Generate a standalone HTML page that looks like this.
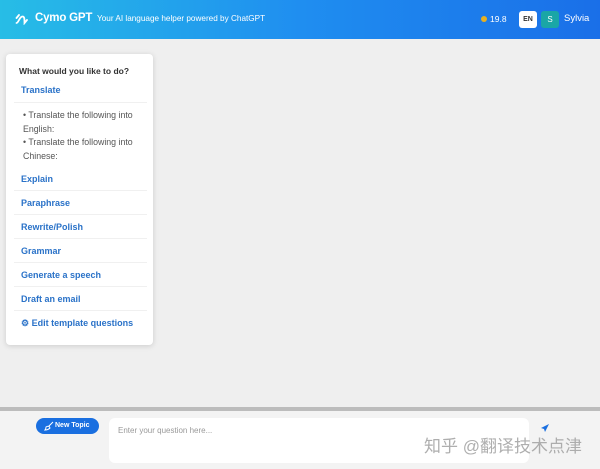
<!DOCTYPE html>
<html><head><style>
*{margin:0;padding:0;box-sizing:border-box}
body{width:600px;height:469px;overflow:hidden;background:#efefef;font-family:"Liberation Sans","Noto Sans CJK SC",sans-serif;position:relative}
.hdr{position:absolute;left:0;top:0;width:600px;height:39px;background:linear-gradient(90deg,#27bde6,#1f8ef0 50%,#1a6fe8);color:#fff}
.card{position:absolute;left:6px;top:54px;width:147px;height:291px;background:#fff;border-radius:4px;box-shadow:0 1px 6px rgba(0,0,0,.15)}
.t{position:absolute;font-size:9px;font-weight:bold;color:#2a72c8;left:15px}
.ln{position:absolute;left:8px;width:133px;height:1px;background:#f0f0f0}
.b{position:absolute;left:17px;font-size:8.8px;color:#555}
</style></head><body>
<div class="hdr">
<svg style="position:absolute;left:15px;top:13px" width="14" height="12" viewBox="0 0 14 12"><path d="M1.5 5 L4 2 M1.5 10 C3.5 10 4.5 3.5 7.5 3.5 C9.5 3.5 9.5 6 9.5 10 L12 7" stroke="#fff" stroke-width="1.8" fill="none" stroke-linecap="round"/></svg>
<div style="position:absolute;left:35px;top:12px;font-size:11.5px;font-weight:bold;letter-spacing:-0.2px">Cymo GPT</div>
<div style="position:absolute;left:97px;top:14px;font-size:8.2px">Your AI language helper powered by ChatGPT</div>
<div style="position:absolute;left:481px;top:16px;width:6px;height:6px;border-radius:50%;background:#e8b020"></div>
<div style="position:absolute;left:490px;top:14px;font-size:8.5px">19.8</div>
<div style="position:absolute;left:519px;top:11px;width:18px;height:17px;background:#fff;border-radius:3px;color:#333;font-size:7px;font-weight:bold;text-align:center;line-height:17px">EN</div>
<div style="position:absolute;left:541px;top:11px;width:18px;height:17px;background:#1aa6a6;border-radius:3px;font-size:8px;text-align:center;line-height:17px">S</div>
<div style="position:absolute;left:564px;top:13px;font-size:9.5px">Sylvia</div>
</div>
<div class="card">
<div style="position:absolute;left:13px;top:12px;font-size:8.5px;font-weight:bold;color:#333">What would you like to do?</div>
<div class="t" style="top:31px">Translate</div>
<div class="ln" style="top:48px"></div>
<div class="b" style="top:56px">• Translate the following into</div>
<div class="b" style="top:70px">English:</div>
<div class="b" style="top:83px">• Translate the following into</div>
<div class="b" style="top:97px">Chinese:</div>
<div class="t" style="top:120px">Explain</div><div class="ln" style="top:136px"></div>
<div class="t" style="top:144px">Paraphrase</div><div class="ln" style="top:160px"></div>
<div class="t" style="top:168px">Rewrite/Polish</div><div class="ln" style="top:184px"></div>
<div class="t" style="top:192px">Grammar</div><div class="ln" style="top:208px"></div>
<div class="t" style="top:216px">Generate a speech</div><div class="ln" style="top:232px"></div>
<div class="t" style="top:240px">Draft an email</div><div class="ln" style="top:256px"></div>
<div class="t" style="top:264px">⚙ Edit template questions</div>
</div>
<div style="position:absolute;left:0;top:407px;width:600px;height:4px;background:#bcbcbc"></div>
<div style="position:absolute;left:0;top:411px;width:600px;height:58px;background:#f3f3f3"></div>
<div style="position:absolute;left:36px;top:418px;width:63px;height:16px;border-radius:8px;background:#1a6fe0;color:#fff;font-size:7px;font-weight:bold;line-height:16px;padding-left:19px">New Topic</div>
<svg style="position:absolute;left:44px;top:421px" width="10" height="10" viewBox="0 0 10 10"><path d="M9 1 L5 5 M2 6 Q5 4 6 7 Q4 9 1 9 Q2 8 2 6Z" stroke="#fff" stroke-width="1" fill="none"/></svg>
<div style="position:absolute;left:109px;top:418px;width:420px;height:45px;background:#fff;border-radius:6px"></div>
<div style="position:absolute;left:118px;top:426px;font-size:8px;color:#999">Enter your question here...</div>
<svg style="position:absolute;left:540px;top:423px" width="10" height="10" viewBox="0 0 10 10"><path d="M9 1 L1 5 L4 6 L5 9Z" fill="#1a6fe0"/></svg>
<div style="position:absolute;left:424px;top:432px;font-size:17px;color:rgba(160,160,160,.85)">知乎 @翻译技术点津</div>
</body></html>
